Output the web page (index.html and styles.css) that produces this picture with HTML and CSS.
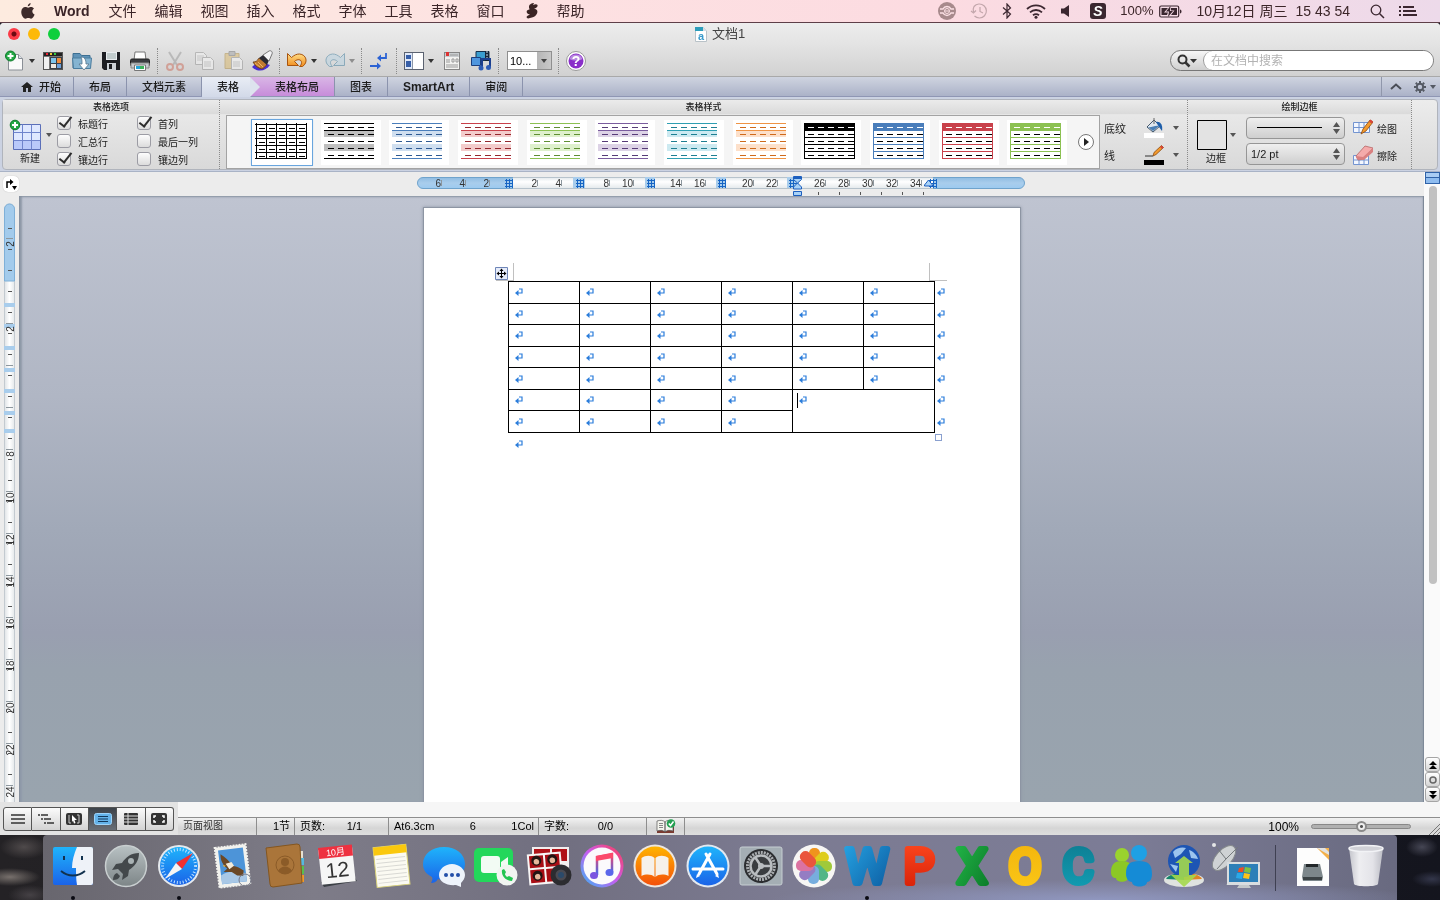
FILE: index.html
```html
<!DOCTYPE html>
<html lang="zh-CN">
  <head>
    <meta charset="UTF-8" />
    <meta name="viewport" content="width=device-width, initial-scale=1.0" />
    <title>文档1</title>
    <link rel="stylesheet" href="styles.css">
  </head>
  <body>
    <!-- Shared shapes -->
    <svg class="defs" aria-hidden="true">
      <defs>
        <linearGradient id="gBlue" x1="0" y1="0" x2="0" y2="1"><stop offset="0" stop-color="#1fb4fb"/><stop offset="1" stop-color="#1a63e8"/></linearGradient>
        <linearGradient id="gGrey" x1="0" y1="0" x2="0" y2="1"><stop offset="0" stop-color="#b9c2c4"/><stop offset="1" stop-color="#7d8587"/></linearGradient>
        <linearGradient id="gOrange" x1="0" y1="0" x2="0" y2="1"><stop offset="0" stop-color="#ffb400"/><stop offset="1" stop-color="#f4500a"/></linearGradient>
        <linearGradient id="gRing" x1="1" y1="0" x2="0" y2="1"><stop offset="0" stop-color="#ff3b4e"/><stop offset=".5" stop-color="#c95cf0"/><stop offset="1" stop-color="#2fbaf5"/></linearGradient>
        <linearGradient id="gNote" x1="0" y1="0" x2="0" y2="1"><stop offset="0" stop-color="#fc4468"/><stop offset="1" stop-color="#3a6bf0"/></linearGradient>
        <linearGradient id="gW" x1="0" y1="0" x2="1" y2="1"><stop offset="0" stop-color="#27a5e4"/><stop offset="1" stop-color="#0b5a9f"/></linearGradient>
        <linearGradient id="gP" x1="0" y1="0" x2="0" y2="1"><stop offset="0" stop-color="#ff4a20"/><stop offset="1" stop-color="#d41c04"/></linearGradient>
        <linearGradient id="gX" x1="0" y1="0" x2="1" y2="1"><stop offset="0" stop-color="#23b648"/><stop offset="1" stop-color="#0a7a28"/></linearGradient>
        <linearGradient id="gO" x1="0" y1="0" x2="0" y2="1"><stop offset="0" stop-color="#f3b40c"/><stop offset="1" stop-color="#fbc818"/></linearGradient>
        <linearGradient id="gC" x1="0" y1="0" x2="0" y2="1"><stop offset="0" stop-color="#0d7b90"/><stop offset="1" stop-color="#12a0b6"/></linearGradient>
        <linearGradient id="gGlass" x1="0" y1="0" x2="1" y2="0"><stop offset="0" stop-color="#c4c5cc"/><stop offset=".3" stop-color="#eeeef1"/><stop offset=".7" stop-color="#e3e3e8"/><stop offset="1" stop-color="#bcbdc5"/></linearGradient>
        <linearGradient id="gUndo" x1="0" y1="0" x2="0" y2="1"><stop offset="0" stop-color="#ffe08a"/><stop offset="1" stop-color="#f08a1c"/></linearGradient>
        <linearGradient id="gRule" x1="0" y1="0" x2="0" y2="1"><stop offset="0" stop-color="#dfe6ea"/><stop offset=".4" stop-color="#fff"/><stop offset="1" stop-color="#e2e7ea"/></linearGradient>
        <linearGradient id="gRuleBlue" x1="0" y1="0" x2="0" y2="1"><stop offset="0" stop-color="#8fbce2"/><stop offset=".5" stop-color="#a9cdec"/><stop offset="1" stop-color="#9ccaf0"/></linearGradient>
        <linearGradient id="gV" x1="0" y1="0" x2="1" y2="0"><stop offset="0" stop-color="#dfe3e6"/><stop offset=".5" stop-color="#fff"/><stop offset="1" stop-color="#e4e8ea"/></linearGradient>
      </defs>

      <symbol id="ret" viewBox="0 0 8 8"><path d="M4 1h3v4H2" fill="none" stroke="#2b7ddb" stroke-width="1.200"/><path d="M0 5 3.500 2v6z" fill="#2b7ddb"/></symbol>
      <symbol id="down" viewBox="0 0 6 4"><path d="M0 0h6L3 4z" fill="currentColor"/></symbol>

      <!-- table style previews -->
      <symbol id="th-grid" viewBox="0 0 60 45">
        <path class="th-line" d="M4 3v36M14 3v36M24 3v36M34 3v36M44 3v36M54 3v36M3 4h52M3 11h52M3 18h52M3 25h52M3 32h52M3 38h52"/>
        <path class="th-dash" d="M7 8h46M7 15h46M7 22h46M7 29h46M7 36h46"/>
      </symbol>
      <symbol id="th-band" viewBox="0 0 60 45">
        <path class="th-fill" d="M3 11h50v6H3zM3 24h50v7H3z"/>
        <path class="th-line" d="M3 3.500h50M3 10.500h50M3 38.500h50"/>
        <path class="th-dash" d="M7 7.500h46M7 14.500h46M7 21.500h46M7 28.500h46M7 35.500h46"/>
      </symbol>
      <symbol id="th-head" viewBox="0 0 60 45">
        <path class="th-solid" d="M3 3h51v8H3z"/>
        <path class="th-line" d="M3.500 3v36M53.500 3v36M3 10.500h51M3 17.500h51M3 24.500h51M3 31.500h51M3 38.500h51"/>
        <path class="th-dash" d="M7 14.500h46M7 21.500h46M7 28.500h46M7 35.500h46"/>
        <path class="th-dash th-white" d="M7 7.500h46"/>
      </symbol>
    </svg>

    <!-- Menu bar -->
    <header class="menubar">
      <nav class="menus">
        <a class="apple" href="#" aria-label="Apple"><svg width="14" height="16" viewBox="0 0 14 16"><path d="M9.600 0c.2 1.600-1.200 3.300-2.800 3.300C6.600 1.800 8 .2 9.600 0zM10 4c1.300 0 2.400.7 3 1.600-2.500 1.500-2 5 .6 5.900-.7 1.900-2 4.200-3.500 4.200-1.100 0-1.500-.7-2.800-.7s-1.800.7-2.800.7C2.300 15.700 0 11.800.3 8.500.5 5.700 2.300 4 4.200 4c1.200 0 2.100.7 3 .7S9 4 10 4z" fill="#3d2b2b"/></svg></a>
        <a class="app" href="#">Word</a>
        <a href="#">文件</a>
        <a href="#">编辑</a>
        <a href="#">视图</a>
        <a href="#">插入</a>
        <a href="#">格式</a>
        <a href="#">字体</a>
        <a href="#">工具</a>
        <a href="#">表格</a>
        <a href="#">窗口</a>
        <a class="script" href="#" aria-label="脚本"><svg width="12" height="16" viewBox="0 0 12 16"><path d="M3 4C3 1 6 0 8 0l-1 2c2-1 4-1 4.500 0S11 5 8 6c3 0 4 2 3 4.500S8 14 6 14.500 2 16 1 15s0-2 1-2.500l2-1C1 11 0 9 1 7.500L4 6C3 6 3 5 3 4z" fill="#3b2424"/></svg></a>
        <a href="#">帮助</a>
      </nav>
      <div class="extras">
        <svg width="18" height="18" viewBox="0 0 18 18"><circle cx="9" cy="9" r="9" fill="#a78a8c"/><path d="M2 7h3a4.500 4.500 0 0 1 8 0h3M2 11h3a4.500 4.500 0 0 0 8 0h3" fill="none" stroke="#fbe0e4" stroke-width="1.500"/><circle cx="9" cy="9" r="2.500" fill="none" stroke="#fbe0e4"/><path d="M7 9h4" stroke="#fbe0e4"/></svg>
        <svg width="18" height="16" viewBox="0 0 18 16"><path d="M4 3.500A7 7 0 1 1 4.500 13M1 8l2.500 2L6 7.500M3.500 9A7 7 0 0 1 4 3.500M10 4v4.500l3 1.500" fill="none" stroke="#c2a6ab" stroke-width="1.200"/></svg>
        <svg width="10" height="16" viewBox="0 0 10 16"><path d="M1 4.500 8.500 11 5 15V1l3.500 4L1 11.500" fill="none" stroke="#3b2730" stroke-width="1.200"/></svg>
        <svg width="20" height="15" viewBox="0 0 20 15"><path d="M1 5a13 13 0 0 1 18 0M4 8.300a9 9 0 0 1 12 0M7 11.300a5 5 0 0 1 6 0" fill="none" stroke="#3b2730" stroke-width="1.800"/><circle cx="10" cy="13.300" r="1.500" fill="#3b2730"/></svg>
        <svg width="10" height="14" viewBox="0 0 10 14"><path d="M1 4.500h3L9 1v12L4 9.500H1z" fill="#3b2730"/></svg>
        <svg class="sogou" width="16" height="16" viewBox="0 0 16 16"><rect width="16" height="16" rx="3" fill="#3b2730"/><text x="8" y="13" font-size="14" font-weight="bold" font-style="italic" text-anchor="middle" fill="#fff">S</text></svg>
        <span class="pct">100%</span>
        <svg width="23" height="13" viewBox="0 0 23 13"><rect x=".7" y="1" width="19" height="11" rx="1.500" fill="none" stroke="#3b2730" stroke-width="1.200"/><path d="M2.500 3H9L5 7.500h4L8 10H2.500zM12 3h6v7h-6l3.500-4.500H12zM11.500 1 7 6.500h3L9 12l5-6h-3z" fill="#3b2730"/><path d="M21 4.500c2 .5 2 3.500 0 4z" fill="#3b2730"/></svg>
        <span class="date">10月12日 周三</span>
        <span class="time">15 43 54</span>
        <svg width="15" height="15" viewBox="0 0 15 15"><circle cx="6" cy="6" r="4.800" fill="none" stroke="#3b2730" stroke-width="1.300"/><path d="m9.500 9.500 4.500 4.500" stroke="#3b2730" stroke-width="1.500"/></svg>
        <svg width="18" height="12" viewBox="0 0 18 12"><path d="M0 2h2M4 2h11M0 6h2M4 6h13M0 10h2M4 10h14" stroke="#3b2730" stroke-width="2"/></svg>
      </div>
    </header>

    <main class="window">
      <div class="titlebar">
        <div class="lights">
          <button class="light red" aria-label="关闭"></button>
          <button class="light yellow" aria-label="最小化"></button>
          <button class="light green" aria-label="缩放"></button>
        </div>
        <h1>
          <svg width="12" height="15" viewBox="0 0 12 15"><path d="M.5.500h8L11.500 4v10.500H.500z" fill="#fff" stroke="#b9c2c8"/><path d="M0 0h8v4H0z" fill="#2d9dbb"/><path d="M8 0v4h4z" fill="#d5dee4"/><text x="6" y="13" font-size="11" font-weight="bold" text-anchor="middle" fill="#3a9bcc">a</text></svg>
          文档1
        </h1>
      </div>

      <div class="toolbar">
        <button class="tool split" aria-label="新建">
          <svg width="22" height="22" viewBox="0 0 22 22"><path d="M4.500 4.500h10l4 4v11.500h-14z" fill="#fafafa" stroke="#8a8f96"/><path d="M14.500 4.500v4h4" fill="#dde2e8" stroke="#8a8f96"/><circle cx="6.500" cy="6" r="5" fill="#24a845" stroke="#0d7a2a"/><path d="M6.500 3v6M3.500 6h6" stroke="#fff" stroke-width="2"/></svg>
          <svg class="arr" width="6" height="4"><use href="#down"/></svg>
        </button>
        <button class="tool" aria-label="模板">
          <svg width="22" height="22" viewBox="0 0 22 22"><rect x="1.500" y="2.500" width="19" height="17" fill="#777" stroke="#555"/><path d="M2 3h18v3H2z" fill="#222"/><path d="M4 3h2v2H4z" fill="#e23"/><path d="M8 3h2v2H8z" fill="#ec3"/><path d="M12 3h2v2h-2z" fill="#3c4"/><path d="M2 7h5v12H2z" fill="#f1f1f1"/><path d="M8 7h12v12H8z" fill="#3a3f46"/><path d="M9 8h5v5H9z" fill="#7fc4ea"/><path d="M15 8h4v5h-4z" fill="#f08c3c"/><path d="M9 14h5v4H9z" fill="#f0e9e0"/><path d="M15 14h4v4h-4z" fill="#6fa2dc"/></svg>
        </button>
        <button class="tool" aria-label="打开">
          <svg width="22" height="22" viewBox="0 0 22 22"><path d="M2 3.500h7l1.500 2H19V18H2z" fill="#5f93b8" stroke="#3d6f92"/><path d="M1.500 8h19l-1 10.500H2.500z" fill="#86b4d1" stroke="#4b7c9e"/><path d="M10 7c4 0 5 3 5 7h3l-5 6-5-6h3c0-3 0-5-1-7z" fill="#fff" stroke="#55738a" stroke-width=".8"/></svg>
        </button>
        <button class="tool" aria-label="保存">
          <svg width="22" height="22" viewBox="0 0 22 22"><path d="M2 2h18v18H4l-2-2z" fill="#1c1d22"/><path d="M6 2h11v8H6z" fill="#e9ecef"/><path d="M7 4h9M7 6h9M7 8h9" stroke="#9aa"/><path d="M7 13h9v7H7z" fill="#cdd2d8"/><path d="M9 14h3v5H9z" fill="#1c1d22"/></svg>
        </button>
        <button class="tool" aria-label="打印">
          <svg width="22" height="22" viewBox="0 0 22 22"><path d="M6 2h10l1 8H5z" fill="#fff" stroke="#777"/><rect x="1.500" y="9" width="19" height="7" rx="1.500" fill="#3a3c40" stroke="#222"/><path d="M2 13h18v5H2z" fill="#c7cbcf" stroke="#888"/><path d="M5.500 15h11v5.500h-11z" fill="#fff" stroke="#777"/><path d="M7 16h4v3H7z" fill="#24a5d8"/><path d="M11 16h4v3h-4z" fill="#3bb35b"/></svg>
        </button>
        <span class="sep"></span>
        <button class="tool dim" aria-label="剪切">
          <svg width="22" height="22" viewBox="0 0 22 22"><path d="M5 2l8 13M17 2 9 15" stroke="#8f8f8f" stroke-width="2"/><circle cx="6" cy="17" r="3" fill="none" stroke="#c9604c" stroke-width="2"/><circle cx="16" cy="17" r="3" fill="none" stroke="#c9604c" stroke-width="2"/></svg>
        </button>
        <button class="tool dim" aria-label="复制">
          <svg width="22" height="22" viewBox="0 0 22 22"><path d="M2.500 2.500h8l3 3v9h-11z" fill="#f5f5f5" stroke="#888"/><path d="M4 6h7M4 8h7M4 10h7" stroke="#aaa"/><path d="M9.500 7.500h8l3 3v9h-11z" fill="#fafafa" stroke="#888"/><path d="M11 12h7M11 14h7M11 16h7" stroke="#aaa"/></svg>
        </button>
        <button class="tool dim" aria-label="粘贴">
          <svg width="22" height="22" viewBox="0 0 22 22"><path d="M3 3.500h14v15H3z" fill="#d9b35c" stroke="#a8822e"/><path d="M7 1.500h6v4H7z" fill="#999" stroke="#666"/><path d="M9.500 7.500h8l3 3v9h-11z" fill="#fafafa" stroke="#888"/><path d="M11 12h7M11 14h7M11 16h7" stroke="#aaa"/></svg>
        </button>
        <button class="tool" aria-label="格式刷">
          <svg width="22" height="22" viewBox="0 0 22 22"><path d="M1 17c3-3 6-5 9-5l9 3c-4 6-12 8-18 2z" fill="#4a2fd0"/><path d="M2 12c3 0 4-1 6-4l8 6c-1 2-3 4-5 5-4-1-7-3-9-7z" fill="#c07a30" stroke="#5b3411" stroke-width=".7"/><path d="M4 13l5 4M7 12l5 5" stroke="#f0b860"/><path d="m8 8 4-3 6 5-2 5z" fill="#2b2b33"/><path d="m12 5 6-4c2-1 4 1 3 3l-3 7z" fill="#f3f3f5" stroke="#777"/></svg>
        </button>
        <span class="sep"></span>
        <button class="tool split" aria-label="撤消">
          <svg width="22" height="22" viewBox="0 0 22 22"><path d="M1.500 3.500v12h11l-4-4c3-3 7-2 7 1 0 2-1 3-2 4h3c6-4 4-12-3-12.500-3 0-5 1-8 3.500z" fill="url(#gUndo)" stroke="#a8540f"/></svg>
          <svg class="arr" width="6" height="4"><use href="#down"/></svg>
        </button>
        <button class="tool split dim" aria-label="恢复">
          <svg width="22" height="22" viewBox="0 0 22 22"><path d="M20.500 3.500v12h-11l4-4c-3-3-7-2-7 1 0 2 1 3 2 4h-3c-6-4-4-12 3-12.500 3 0 5 1 8 3.500z" fill="#b5d3e4" stroke="#2f7396"/></svg>
          <svg class="arr" width="6" height="4"><use href="#down"/></svg>
        </button>
        <span class="sep"></span>
        <button class="tool" aria-label="显示编辑标记">
          <svg width="22" height="22" viewBox="0 0 22 22"><path d="M18 3v5h-6M2 16h7" fill="none" stroke="#2c63d4" stroke-width="1.800"/><path d="M9 8l4-3.500v7zM13 16l-4-3.500v7z" fill="#2c63d4"/></svg>
        </button>
        <span class="sep"></span>
        <button class="tool split" aria-label="侧栏">
          <svg width="22" height="22" viewBox="0 0 22 22"><rect x="1.500" y="2.500" width="19" height="17" fill="#fff" stroke="#5b6270"/><path d="M2 3h7v16H2z" fill="#dfe8f8"/><path d="M9.500 3v16" stroke="#8c97a8"/><path d="M3 5h5v4H3zM3 11h5v6H3z" fill="#365ea8"/></svg>
          <svg class="arr" width="6" height="4"><use href="#down"/></svg>
        </button>
        <button class="tool" aria-label="工具箱">
          <svg width="22" height="22" viewBox="0 0 22 22"><rect x="3.500" y="2.500" width="15" height="17" fill="#f2f2f0" stroke="#858585"/><path d="M4 3h14v4H4z" fill="#c9cdd0"/><path d="M5 2h3v4H5z" fill="#d33"/><path d="M9 5h8M5 10h4M5 12h4M11 9h2v3h-2zM15 9h2v3h-2zM5 15h12M5 17h12" stroke="#999" fill="none"/></svg>
        </button>
        <button class="tool" aria-label="媒体">
          <svg width="22" height="22" viewBox="0 0 22 22"><path d="M6 1.500h13v9H6z" fill="#3a9dd0" stroke="#16324f"/><path d="M15 1h4v10h-4z" fill="#16263a"/><path d="M16 2h2M16 5h2M16 8h2" stroke="#cde"/><path d="M1.500 7.500h9v8h-9z" fill="#4f96df" stroke="#1c3f7e"/><path d="M12 18V9h8v8" fill="none" stroke="#1c3f8e" stroke-width="2"/><circle cx="11" cy="18" r="2.500" fill="#2d5cb5"/><circle cx="18.500" cy="17.500" r="2.500" fill="#2d5cb5"/></svg>
        </button>
        <span class="sep"></span>
        <span class="zoom-pick">
          <select aria-label="显示比例"><option>10...</option></select>
          <svg width="6" height="4"><use href="#down"/></svg>
        </span>
        <span class="sep"></span>
        <button class="tool" aria-label="帮助">
          <svg width="22" height="22" viewBox="0 0 22 22"><circle cx="11" cy="11" r="9.500" fill="#fff" stroke="#999"/><circle cx="11" cy="11" r="7.500" fill="#8a2fc9"/><path d="M4.500 9a7 7 0 0 1 13 0c-4 2-9 2-13 0z" fill="#b98ae0"/><text x="11" y="16" font-size="14" font-weight="bold" text-anchor="middle" fill="#fff">?</text></svg>
        </button>

        <div class="search">
          <button aria-label="搜索选项">
            <svg width="20" height="14" viewBox="0 0 20 14"><circle cx="5.500" cy="5.500" r="4" fill="none" stroke="#333" stroke-width="2"/><path d="m8.500 8.500 4 4" stroke="#333" stroke-width="2.500"/><path d="M13 5h7l-3.500 4z" fill="#333"/></svg>
          </button>
          <input type="text" aria-label="搜索" placeholder="在文档中搜索" />
        </div>
      </div>

      <nav class="tabs">
        <a href="#"><svg width="12" height="10" viewBox="0 0 12 10"><path d="M6 0 0 5h2v5h3V6h2v4h3V5h2z" fill="#222"/></svg>开始</a>
        <a href="#">布局</a>
        <a href="#">文档元素</a>
        <a class="active" href="#">表格</a>
        <a class="context" href="#">表格布局</a>
        <a href="#">图表</a>
        <a class="latin" href="#">SmartArt</a>
        <a href="#">审阅</a>
        <div class="tab-tools">
          <button aria-label="折叠"><svg width="12" height="7" viewBox="0 0 12 7"><path d="m1 6 5-4.500L11 6" fill="none" stroke="#4a4e57" stroke-width="2"/></svg></button>
          <button aria-label="设置"><svg width="22" height="12" viewBox="0 0 22 12"><circle cx="6" cy="6" r="3.200" fill="none" stroke="#555a64" stroke-width="2"/><path d="M6 0v2M6 10v2M0 6h2M10 6h2M1.800 1.800l1.400 1.400M8.800 8.800l1.400 1.400M10.200 1.800 8.800 3.200M3.200 8.800l-1.400 1.400" stroke="#555a64" stroke-width="2"/><path d="M16 4h6l-3 4z" fill="#555a64"/></svg></button>
        </div>
      </nav>

      <div class="ribbon">
        <div class="panel">
          <section class="group options">
            <h2>表格选项</h2>
            <div class="group-body">
              <button class="big">
                <span class="big-icon">
                  <svg width="34" height="32" viewBox="0 0 34 32"><path d="M4.500 5.500h27v25h-27z" fill="#dfe8ff" stroke="#5b6fb8"/><path d="M5 22h26v8H5z" fill="#b9c9fa"/><path d="M4.500 13.500h27M4.500 21.500h27M13.500 5.500v25M22.500 5.500v25" stroke="#6f84cc"/><circle cx="6" cy="6" r="4.800" fill="#24a845" stroke="#0d7a2a"/><path d="M6 3v6M3 6h6" stroke="#fff" stroke-width="2"/></svg>
                  <svg class="arr" width="6" height="4"><use href="#down"/></svg>
                </span>
                新建
              </button>
              <div class="checks">
                <label><input type="checkbox" checked />标题行</label>
                <label><input type="checkbox" checked />首列</label>
                <label><input type="checkbox" />汇总行</label>
                <label><input type="checkbox" />最后一列</label>
                <label><input type="checkbox" checked />镶边行</label>
                <label><input type="checkbox" />镶边列</label>
              </div>
            </div>
          </section>

          <section class="group styles">
            <h2>表格样式</h2>
            <div class="group-body">
              <div class="gallery">
                <button class="thumb selected" aria-label="网格型"><svg width="60" height="45"><use href="#th-grid"/></svg></button>
                <button class="thumb" aria-label="浅色底纹"><svg width="60" height="45"><use href="#th-band"/></svg></button>
                <button class="thumb blue" aria-label="浅色底纹 蓝"><svg width="60" height="45"><use href="#th-band"/></svg></button>
                <button class="thumb red" aria-label="浅色底纹 红"><svg width="60" height="45"><use href="#th-band"/></svg></button>
                <button class="thumb green" aria-label="浅色底纹 绿"><svg width="60" height="45"><use href="#th-band"/></svg></button>
                <button class="thumb purple" aria-label="浅色底纹 紫"><svg width="60" height="45"><use href="#th-band"/></svg></button>
                <button class="thumb teal" aria-label="浅色底纹 青"><svg width="60" height="45"><use href="#th-band"/></svg></button>
                <button class="thumb orange" aria-label="浅色底纹 橙"><svg width="60" height="45"><use href="#th-band"/></svg></button>
                <button class="thumb head" aria-label="浅色列表"><svg width="60" height="45"><use href="#th-head"/></svg></button>
                <button class="thumb blue head" aria-label="浅色列表 蓝"><svg width="60" height="45"><use href="#th-head"/></svg></button>
                <button class="thumb red head" aria-label="浅色列表 红"><svg width="60" height="45"><use href="#th-head"/></svg></button>
                <button class="thumb green head" aria-label="浅色列表 绿"><svg width="60" height="45"><use href="#th-head"/></svg></button>
                <button class="more" aria-label="更多样式"><svg width="16" height="16" viewBox="0 0 16 16"><circle cx="8" cy="8" r="7.500" fill="#fff" stroke="#777"/><path d="M6 4v8l5-4z" fill="#222"/></svg></button>
              </div>
              <div class="shade">
                <button>底纹
                  <svg width="20" height="20" viewBox="0 0 20 20"><path d="M0 15h20v5H0z" fill="#fff"/><path d="m3 9 7-7 6 6-7 6z" fill="#dfe7ef" stroke="#44586c"/><path d="M4 9c3 1 7-2 11-1l-6 5z" fill="#4a7fb5"/><path d="M12 4c5-1 7 4 6 9l-3-4z" fill="#1f5faa"/><path d="M10 0v6" stroke="#666"/></svg>
                  <svg class="arr" width="6" height="4"><use href="#down"/></svg>
                </button>
                <button>线
                  <svg width="20" height="20" viewBox="0 0 20 20"><path d="M0 15h20v5H0z"/><path d="M1 11h8" stroke="#333"/><path d="m9 11 1-3.500L17.500.500l2 2-7.500 7z" fill="#f39a2c" stroke="#8b4a10" stroke-width=".8"/><path d="m16 2 1.500-1.500 2 2L18 4z" fill="#d9443a"/></svg>
                  <svg class="arr" width="6" height="4"><use href="#down"/></svg>
                </button>
              </div>
            </div>
          </section>

          <section class="group borders">
            <h2>绘制边框</h2>
            <div class="group-body">
              <button class="big">
                <span class="big-icon">
                  <svg width="30" height="30" viewBox="0 0 30 30"><path d="M.5.500h29v29H.500z" fill="#e3e3e3" stroke="#000"/></svg>
                  <svg class="arr" width="6" height="4"><use href="#down"/></svg>
                </span>
                边框
              </button>
              <div class="picks">
                <span class="pick line"><select aria-label="线型"><option aria-label="实线"></option></select><svg width="7" height="12" viewBox="0 0 7 12"><path d="M0 5h7L3.500 0zM0 7h7l-3.500 5z" fill="#555"/></svg></span>
                <span class="pick"><select aria-label="粗细"><option>1/2 pt</option></select><svg width="7" height="12" viewBox="0 0 7 12"><path d="M0 5h7L3.500 0zM0 7h7l-3.500 5z" fill="#555"/></svg></span>
              </div>
              <div class="draws">
                <button><svg width="20" height="20" viewBox="0 0 20 20"><path d="M.5 4.500h16v10H.500zM.5 9.500h16M6 4.500v10M11 4.500v10" fill="#f3f7ff" stroke="#7394d0"/><path d="m8 16 2-5 7-9 3 2-7 9z" fill="#f39a2c" stroke="#8b4a10" stroke-width=".8"/><path d="m16 4 1.500-2.500L20 3.500l-1 2z" fill="#d9443a"/></svg>绘图</button>
                <button><svg width="20" height="20" viewBox="0 0 20 20"><path d="M.5 10.500h15v9H.500zM.5 15h15M6 10.500v9M11 10.500v9" fill="#f3f7ff" stroke="#7394d0"/><path d="m3 11 9-10 8 2-9 11-6 1z" fill="#f4abab" stroke="#b56464" stroke-width=".8"/><path d="m3 11 7 1 10-9v4l-9 8-7-1z" fill="#d98080"/></svg>擦除</button>
              </div>
            </div>
          </section>
        </div>
      </div>

      <div class="main">
        <div class="doc">
          <div class="ruler-row">
            <button class="tabstop" aria-label="制表符"><svg width="12" height="12" viewBox="0 0 12 12"><path d="M2 10V4h5" fill="none" stroke="#000" stroke-width="1.500"/><path d="M5 1v6l3.500-3zM7 8h5l-2.500 4z"/></svg></button>
            <svg class="hruler" width="608" height="24" viewBox="0 0 608 24">
              <rect x=".5" y="5.500" width="607" height="11" rx="5.500" fill="url(#gRuleBlue)" stroke="#6fa3cc"/>
              <path d="M96 5h420v12H96z" fill="url(#gRule)"/><path d="M96 5.500h420M96 16.500h420" stroke="#b7c3cc"/>
              <path d="M156 5h12v11h-12zM228 5h10v11h-10zM299 5h10v11h-10zM370 5h12v11h-12z" fill="#a9cdec"/>
              <path class="ticks" d="M24.500 8v6M48.500 8v6M72.500 8v6M120.500 8v6M144.500 8v6M192.500 8v6M216.500 8v6M264.500 8v6M288.500 8v6M336.500 8v6M360.500 8v6M408.500 8v6M432.500 8v6M456.500 8v6M480.500 8v6M504.500 8v6"/>
              <path class="ticks dark" d="M401.500 20v3M422.500 20v3M443.500 20v3M464.500 20v3M485.500 20v3M506.500 20v3"/>
              <g class="nums">
                <text x="24" y="15">6</text><text x="48" y="15">4</text><text x="72" y="15">2</text>
                <text x="120" y="15">2</text><text x="144" y="15">4</text><text x="192" y="15">8</text><text x="216" y="15">10</text>
                <text x="264" y="15">14</text><text x="288" y="15">16</text><text x="336" y="15">20</text><text x="360" y="15">22</text>
                <text x="408" y="15">26</text><text x="432" y="15">28</text><text x="456" y="15">30</text><text x="480" y="15">32</text><text x="504" y="15">34</text>
              </g>
              <g class="cols">
                <path d="M88 8h8M88 11h8M88 14h8M89 7v9M92 7v9M95 7v9"/>
                <path d="M159 8h8M159 11h8M159 14h8M160 7v9M163 7v9M166 7v9"/>
                <path d="M230 8h8M230 11h8M230 14h8M231 7v9M234 7v9M237 7v9"/>
                <path d="M301 8h8M301 11h8M301 14h8M302 7v9M305 7v9M308 7v9"/>
                <path d="M372 8h8M372 11h8M372 14h8M373 7v9M376 7v9"/>
                <path d="M512 8h8M512 11h8M512 14h8M513 7v9M516 7v9M519 7v9"/>
              </g>
              <path d="M376.500 4.500h8v3l-4 3.500-4-3.500zM380.500 11l4 4v2h-8v-2zM376.500 19.500h8v4h-8zM507.500 13l4-5 4 5v1h-8z" fill="#a8d2f8" stroke="#1d5fbe"/>
              <path d="M377 5h7v2h-7z" fill="#1d5fbe"/>
            </svg>
          </div>
          <div class="work">
            <svg class="vruler" width="19" height="606" viewBox="0 0 19 606">
              <path d="M4.500 606V13a5 5 0 0 1 10 0v593" fill="url(#gV)" stroke="#c3cad0"/>
              <path d="M4.500 85V13a5 5 0 0 1 10 0v72z" fill="#a3cbec" stroke="#7fb0d8"/>
              <path d="M4 107h11v4H4zM4 128h11v4H4zM4 150h11v4H4zM4 172h11v4H4zM4 193h11v4H4zM4 215h11v4H4zM4 233h11v4H4z" fill="#a9cdec"/>
              <path class="ticks" d="M6 42.500h7M6 127.500h7M6 169.500h7M6 211.500h7M6 253.500h7M6 295.500h7M6 337.500h7M6 379.500h7M6 421.500h7M6 463.500h7M6 505.500h7M6 547.500h7M6 589.500h7"/>
              <path class="ticks dark" d="M8 32.500h4M8 53.500h4M8 74.500h4M8 95.500h4M8 116.500h4M8 137.500h4M8 158.500h4M8 179.500h4M8 200.500h4M8 221.500h4M8 242.500h4M8 263.500h4M8 284.500h4M8 305.500h4M8 326.500h4M8 347.500h4M8 368.500h4M8 389.500h4M8 410.500h4M8 431.500h4M8 452.500h4M8 473.500h4M8 494.500h4M8 515.500h4M8 536.500h4M8 557.500h4M8 578.500h4"/>
              <g class="vnums">
                <text transform="translate(14 48) rotate(-90)">2</text><text transform="translate(14 133) rotate(-90)">2</text>
                <text transform="translate(14 258) rotate(-90)">8</text><text transform="translate(14 302) rotate(-90)">10</text>
                <text transform="translate(14 344) rotate(-90)">12</text><text transform="translate(14 386) rotate(-90)">14</text>
                <text transform="translate(14 428) rotate(-90)">16</text><text transform="translate(14 470) rotate(-90)">18</text>
                <text transform="translate(14 512) rotate(-90)">20</text><text transform="translate(14 554) rotate(-90)">22</text>
                <text transform="translate(14 596) rotate(-90)">24</text>
              </g>
            </svg>
            <div class="canvas">
              <article class="page">
                <span class="corner left"></span>
                <span class="corner right"></span>
                <div class="sheet">
                  <button class="move" aria-label="移动表格"><svg width="13" height="13" viewBox="0 0 13 13"><path d="M.5.500h12v12H.500z" fill="#e6ecfa" stroke="#6f86b8"/><path d="M6.500 3v7M3 6.500h7" stroke="#000"/><path d="M6.500 1.500 8.500 4h-4zM6.500 11.500 8.500 9h-4zM1.500 6.500 4 4.500v4zM11.500 6.500 9 4.500v4z"/></svg></button>
                  <table>
                    <tr><td><svg><use href="#ret"/></svg></td><td><svg><use href="#ret"/></svg></td><td><svg><use href="#ret"/></svg></td><td><svg><use href="#ret"/></svg></td><td><svg><use href="#ret"/></svg></td><td><svg><use href="#ret"/></svg></td><td class="end"><svg><use href="#ret"/></svg></td></tr>
                    <tr><td><svg><use href="#ret"/></svg></td><td><svg><use href="#ret"/></svg></td><td><svg><use href="#ret"/></svg></td><td><svg><use href="#ret"/></svg></td><td><svg><use href="#ret"/></svg></td><td><svg><use href="#ret"/></svg></td><td class="end"><svg><use href="#ret"/></svg></td></tr>
                    <tr><td><svg><use href="#ret"/></svg></td><td><svg><use href="#ret"/></svg></td><td><svg><use href="#ret"/></svg></td><td><svg><use href="#ret"/></svg></td><td><svg><use href="#ret"/></svg></td><td><svg><use href="#ret"/></svg></td><td class="end"><svg><use href="#ret"/></svg></td></tr>
                    <tr><td><svg><use href="#ret"/></svg></td><td><svg><use href="#ret"/></svg></td><td><svg><use href="#ret"/></svg></td><td><svg><use href="#ret"/></svg></td><td><svg><use href="#ret"/></svg></td><td><svg><use href="#ret"/></svg></td><td class="end"><svg><use href="#ret"/></svg></td></tr>
                    <tr><td><svg><use href="#ret"/></svg></td><td><svg><use href="#ret"/></svg></td><td><svg><use href="#ret"/></svg></td><td><svg><use href="#ret"/></svg></td><td><svg><use href="#ret"/></svg></td><td><svg><use href="#ret"/></svg></td><td class="end"><svg><use href="#ret"/></svg></td></tr>
                    <tr><td><svg><use href="#ret"/></svg></td><td><svg><use href="#ret"/></svg></td><td><svg><use href="#ret"/></svg></td><td><svg><use href="#ret"/></svg></td><td class="merged" colspan="2" rowspan="2"><svg><use href="#ret"/></svg></td><td class="end"><svg><use href="#ret"/></svg></td></tr>
                    <tr><td><svg><use href="#ret"/></svg></td><td><svg><use href="#ret"/></svg></td><td><svg><use href="#ret"/></svg></td><td><svg><use href="#ret"/></svg></td><td class="end"><svg><use href="#ret"/></svg></td></tr>
                  </table>
                  <span class="resize"></span>
                  <p><svg><use href="#ret"/></svg></p>
                </div>
              </article>
            </div>
          </div>
        </div>
        <div class="vscroll">
          <button class="splitter" aria-label="拆分"></button>
          <div class="track"><div class="thumb-bar"></div></div>
          <button class="nav" aria-label="上一页"><svg width="8" height="8" viewBox="0 0 8 8"><path d="M4 0 8 4H0zM4 4l4 4H0z"/></svg></button>
          <button class="nav" aria-label="浏览对象"><svg width="8" height="8" viewBox="0 0 8 8"><circle cx="4" cy="4" r="3" fill="#ddd" stroke="#666" stroke-width="1.500"/></svg></button>
          <button class="nav" aria-label="下一页"><svg width="8" height="8" viewBox="0 0 8 8"><path d="M4 4 0 0h8zM4 8 0 4h8z"/></svg></button>
        </div>
      </div>

      <footer class="footer">
        <div class="views">
          <button aria-label="草稿视图"><svg width="16" height="12" viewBox="0 0 16 12"><path d="M1 2h14M1 6h14M1 10h14" stroke="#333" stroke-width="1.500"/></svg></button>
          <button aria-label="大纲视图"><svg width="16" height="12" viewBox="0 0 16 12"><path d="M0 2h2M3 2h7M3 6h2M6 6h7M6 10h2M9 10h7" stroke="#333" stroke-width="1.500"/></svg></button>
          <button aria-label="发布版式视图"><svg width="16" height="12" viewBox="0 0 16 12"><rect width="16" height="12" rx="2" fill="#333"/><path d="M3 2v8h2M11 2h2v8h-2" fill="none" stroke="#ccc"/><path d="m6 2 5 5H8.500l1 3-1.500.500-1-3L6 9z" fill="#fff"/></svg></button>
          <button class="on" aria-label="页面视图"><svg width="18" height="12" viewBox="0 0 18 12"><rect x=".5" y=".5" width="17" height="11" rx="2" fill="#63b3ea" stroke="#9cd4fb"/><path d="M4 3.500h10M4 6h10M4 8.500h10" stroke="#12395c"/></svg></button>
          <button aria-label="笔记本版式视图"><svg width="16" height="12" viewBox="0 0 16 12"><rect x="1" width="14" height="12" rx="1" fill="#333"/><path d="M0 3h15M0 6h15M0 9h15M5 0v12" stroke="#ddd"/></svg></button>
          <button aria-label="全屏视图"><svg width="16" height="12" viewBox="0 0 16 12"><rect width="16" height="12" rx="2" fill="#333"/><path d="M3 5V3h2M11 3h2v2M13 7v2h-2M5 9H3V7" fill="none" stroke="#fff" stroke-width="1.500"/></svg></button>
        </div>
        <div class="info">
          <div class="hscroll"></div>
          <div class="status">
            <span class="cell view-name">页面视图</span>
            <span class="cell section">1节</span>
            <span class="cell pages"><span>页数:</span><span>1/1</span></span>
            <span class="cell place"><span>At6.3cm</span><span>6</span><span>1Col</span></span>
            <span class="cell words"><span>字数:</span><span>0/0</span></span>
            <span class="cell spell"><svg width="20" height="15" viewBox="0 0 20 15"><path d="M1 3h17v11H1z" fill="#7b3a30"/><path d="M1 2c3-1 6-1 8 1v10c-2-2-5-2-8-1zM17 2c-3-1-6-1-8 1v10c2-2 5-2 8-1z" fill="#f4f4ee" stroke="#555" stroke-width=".7"/><path d="M3 4.500h4M3 6.500h4M3 8.500h4" stroke="#888"/><circle cx="15" cy="4.500" r="4.300" fill="#24a052"/><path d="m12.800 4.500 1.700 2 3-4" fill="none" stroke="#fff" stroke-width="1.500"/></svg></span>
            <label class="zoom" for="zoom">100%</label>
            <input id="zoom" type="range" min="0" max="100" value="51" />
            <svg class="grip" width="12" height="12" viewBox="0 0 12 12"><path d="M1 12 12 1M5 12l7-7M9 12l3-3" stroke="#777"/></svg>
          </div>
        </div>
      </footer>
    </main>

    <!-- Dock -->
    <div class="desktop">
      <nav class="dock">
        <a class="running" href="#" aria-label="Finder"><svg viewBox="0 0 44 44"><rect x="2" y="3" width="40" height="38" rx="2" fill="url(#gBlue)"/><path d="M26 3c-3 7-5 14-5 21h4c0 6 0 11 1 17h14a2 2 0 0 0 2-2V5a2 2 0 0 0-2-2z" fill="#eef2f8"/><path d="M13 12v4M31 12v4" stroke="#12324f" stroke-width="2"/><path d="M10 27c7 6 17 6 24 0" fill="none" stroke="#12324f" stroke-width="1.800"/></svg></a>
        <a href="#" aria-label="Launchpad"><svg viewBox="0 0 44 44"><circle cx="22" cy="22" r="20.500" fill="url(#gGrey)" stroke="#c9cfd0" stroke-width="1.500"/><path d="M35 9c-8 0-13 4-17 10l-6 1-4 6 6-1 5 5-1 6 6-4 1-6c6-4 10-9 10-17zM13 29c-3 1-4 4-4 7 3 0 6-1 7-4z" fill="#43484b"/><circle cx="27" cy="17" r="3" fill="#a9b2b4"/></svg></a>
        <a class="running" href="#" aria-label="Safari"><svg viewBox="0 0 44 44"><circle cx="22" cy="22" r="21" fill="#e6eaee"/><circle cx="22" cy="22" r="19" fill="url(#gBlue)"/><circle cx="22" cy="22" r="16.500" fill="none" stroke="#bfe3ff" stroke-width="3" stroke-dasharray="1 2"/><path d="m36 9-17 10 6 6z" fill="#f03030"/><path d="m8 35 11-16 6 6z" fill="#f4f4f4"/></svg></a>
        <a href="#" aria-label="Mail"><svg viewBox="0 0 44 44"><g transform="rotate(-7 22 22)"><rect x="7" y="2" width="31" height="40" fill="#f2f2ee" stroke="#f2f2ee" stroke-width="2" stroke-dasharray="2 1"/><rect x="10" y="5" width="25" height="34" fill="#4d94d8"/><path d="M10 30c7-4 15-3 25 1v8H10z" fill="#a9c8e6"/><path d="M12 9c4 3 8 8 11 13 4 1 7 3 10 6l-1 5-6-1-5-4-8-1 4-3c-4-4-6-9-5-15z" fill="#6b4826"/><path d="m16 19 6-1 2 4-5 3z" fill="#f3ead8"/><path d="m13 20 3 1-2 1z" fill="#f0b42c"/></g><circle cx="35" cy="36" r="6" fill="none" stroke="#777a88"/></svg></a>
        <a href="#" aria-label="通讯录"><svg viewBox="0 0 44 44"><path d="M35 7h5v7h-5z" fill="#e8e2d4"/><path d="M35 14h6v7h-6z" fill="#55b9e0"/><path d="M35 22h6v8h-6z" fill="#58bf4c"/><path d="M35 31h6v7h-6z" fill="#f09a2a"/><path d="m3 4 31-4q3 0 3 3l2 36-29 4q-3 0-3-3z" fill="#aa753a" stroke="#845620"/><circle cx="22" cy="21" r="9" fill="none" stroke="#8b5b28"/><circle cx="22" cy="18" r="4" fill="#8b5b28"/><path d="M15 27c3-6 11-6 14 0-4 4-10 4-14 0z" fill="#8b5b28"/></svg></a>
        <a href="#" aria-label="日历"><svg viewBox="0 0 44 44"><path d="m5 38 34-4 2 3-33 6z" fill="#3c4046"/><g transform="rotate(-6 22 22)"><path d="M4 4h34v35H4z" fill="#f6f6f6"/><path d="M4 2h34v11H4z" fill="#ee3140"/><text x="21" y="11" font-size="9" text-anchor="middle" fill="#fff">10月</text><text x="21" y="33" font-size="21" text-anchor="middle" fill="#333">12</text></g></svg></a>
        <a href="#" aria-label="备忘录"><svg viewBox="0 0 44 44"><g transform="rotate(-6 22 22)"><path d="M6 2h33v40H6z" fill="#fbfaf2" stroke="#d9d27a"/><path d="M6 2h33v8H6z" fill="#fac80e"/><path d="M8 14h29M8 18h29M8 22h29M8 26h29M8 30h29M8 34h29M8 38h29" stroke="#d9d9d4"/></g></svg></a>
        <a href="#" aria-label="信息"><svg viewBox="0 0 44 44"><path d="M22 3c12 0 21 7 21 17s-9 16-21 16c-2 0-4 0-6-1-2 3-4 4-7 4 1-2 2-4 1-6C4 30 1 26 1 20 1 10 10 3 22 3z" fill="url(#gBlue)"/><path d="M30 20c7 0 13 5 13 11 0 3-2 6-4 8v4l-5-2c-9 1-17-3-17-10 0-6 6-11 13-11z" fill="#eef3fb"/><circle cx="24" cy="31" r="2" fill="#234ea8"/><circle cx="30" cy="31" r="2" fill="#234ea8"/><circle cx="36" cy="31" r="2" fill="#234ea8"/></svg></a>
        <a href="#" aria-label="FaceTime"><svg viewBox="0 0 44 44"><rect y="4" width="39" height="34" rx="5" fill="#23d75b"/><rect x="7" y="12" width="19" height="17" rx="3" fill="#f2fbf4"/><path d="m27 18 7-5v15l-7-5z" fill="#f2fbf4"/><circle cx="33" cy="31" r="10.500" fill="#f1f5f1"/><path d="M28 26c-1 6 4 11 10 11l1-3-4-2-2 1c-1-1-2-2-2-3l1-2-2-3z" fill="#23c552"/></svg></a>
        <a href="#" aria-label="Photo Booth"><svg viewBox="0 0 44 44"><path d="M5 3h37v26H5z" fill="#f1eeee"/><path d="M7 5h16v10H7zM25 5h15v12H25z" fill="#b01218"/><g transform="rotate(-5 18 24)"><path d="M1 9h34v31H1z" fill="#f7f5f5"/><path d="M3 11h14v12H3zM19 11h14v12H19zM3 25h14v13H3zM19 25h14v13H19z" fill="#a80e15"/><g fill="#231413"><circle cx="10" cy="16" r="5"/><circle cx="26" cy="16" r="5"/><circle cx="10" cy="31" r="5"/></g><g fill="#e6b79c"><circle cx="10" cy="17" r="2.800"/><circle cx="26" cy="17" r="2.800"/><circle cx="10" cy="32" r="2.800"/></g></g><circle cx="34" cy="31" r="10.500" fill="#2c2c30"/><circle cx="34" cy="31" r="5.500" fill="#4a4a52"/><circle cx="34" cy="31" r="3" fill="#2b4a6a"/></svg></a>
        <a href="#" aria-label="iTunes"><svg viewBox="0 0 44 44"><circle cx="22" cy="22" r="21.500" fill="url(#gRing)"/><circle cx="22" cy="22" r="18.500" fill="#fbfafc"/><path d="M17 31V13l15-3v18" fill="none" stroke="url(#gNote)" stroke-width="2.500"/><path d="M16 12l17-3v5l-17 3z" fill="#fb4a6c"/><ellipse cx="14" cy="31.500" rx="4" ry="3.500" fill="#7b54e0"/><ellipse cx="29.500" cy="28.500" rx="4" ry="3.500" fill="#5a66ea"/></svg></a>
        <a href="#" aria-label="iBooks"><svg viewBox="0 0 44 44"><circle cx="22" cy="22" r="21.500" fill="#ece6e0"/><circle cx="22" cy="22" r="19.500" fill="url(#gOrange)"/><path d="M21.500 14c-3-3-9-3-13 0v18c4-2 10-2 13 1zM22.500 14c3-3 9-3 13 0v18c-4-2-10-2-13 1z" fill="#f6f1ea"/></svg></a>
        <a href="#" aria-label="App Store"><svg viewBox="0 0 44 44"><circle cx="22" cy="22" r="21.500" fill="#e3e9f0"/><circle cx="22" cy="22" r="19.500" fill="url(#gBlue)"/><g stroke="#fff" stroke-width="3" stroke-linecap="round"><path d="M24 10 13 30M20 10l11 20M7 25h30"/></g><path d="m10 34 1-4 3 2zM33 34l-1-4-3 2z" fill="#fff"/></svg></a>
        <a href="#" aria-label="系统偏好设置"><svg viewBox="0 0 44 44"><rect x="1" y="3" width="42" height="38" rx="2" fill="#a4aeb4" stroke="#c6ced2"/><circle cx="22" cy="22" r="17" fill="#2b2d30"/><circle cx="22" cy="22" r="13.500" fill="none" stroke="#a9adb0" stroke-width="3" stroke-dasharray="2 1"/><circle cx="22" cy="22" r="10.500" fill="#3a3d40" stroke="#b9bdc0" stroke-width="2.500"/><path d="M22 22h11M22 22l-6-9M22 22l-6 9" stroke="#b9bdc0" stroke-width="2.500"/><circle cx="22" cy="22" r="3" fill="#b9bdc0"/></svg></a>
        <a href="#" aria-label="照片"><svg viewBox="0 0 44 44"><circle cx="22" cy="22" r="21.500" fill="#f7f6f4"/><g class="petals"><rect x="17" y="4" width="11" height="18" rx="5" fill="#f79a1e"/><rect x="17" y="4" width="11" height="18" rx="5" fill="#e6d51e" transform="rotate(45 22 22)"/><rect x="17" y="4" width="11" height="18" rx="5" fill="#a5d13c" transform="rotate(90 22 22)"/><rect x="17" y="4" width="11" height="18" rx="5" fill="#55bd8c" transform="rotate(135 22 22)"/><rect x="17" y="4" width="11" height="18" rx="5" fill="#7bb4e8" transform="rotate(180 22 22)"/><rect x="17" y="4" width="11" height="18" rx="5" fill="#9a82cc" transform="rotate(225 22 22)"/><rect x="17" y="4" width="11" height="18" rx="5" fill="#e276a8" transform="rotate(270 22 22)"/><rect x="17" y="4" width="11" height="18" rx="5" fill="#f2583e" transform="rotate(315 22 22)"/></g></svg></a>
        <a class="running" href="#" aria-label="Word"><svg class="logo" viewBox="0 0 44 44"><text x="22" y="39" fill="url(#gW)" stroke="url(#gW)">W</text></svg></a>
        <a href="#" aria-label="PowerPoint"><svg class="logo" viewBox="0 0 44 44"><text x="22" y="39" fill="url(#gP)" stroke="url(#gP)">P</text></svg></a>
        <a href="#" aria-label="Excel"><svg class="logo" viewBox="0 0 44 44"><text x="22" y="39" fill="url(#gX)" stroke="url(#gX)">X</text></svg></a>
        <a href="#" aria-label="Outlook"><svg class="logo" viewBox="0 0 44 44"><text x="22" y="39" fill="url(#gO)" stroke="url(#gO)">O</text></svg></a>
        <a href="#" aria-label="Communicator"><svg class="logo" viewBox="0 0 44 44"><text x="22" y="39" fill="url(#gC)" stroke="url(#gC)">C</text></svg></a>
        <a href="#" aria-label="Messenger"><svg viewBox="0 0 44 44"><circle cx="13" cy="11" r="7" fill="#9ad32e"/><path d="M2 28c0-8 4-11 11-11s10 3 10 11c0 4-2 6-4 6 0 5-12 5-12 0-3 0-5-2-5-6z" fill="#8cc825"/><circle cx="30" cy="9" r="8" fill="#1fa0e4"/><path d="M17 30c0-10 4-13 13-13s13 3 13 13c0 5-2 8-5 8 0 6-15 6-15 0-3 0-6-3-6-8z" fill="#158bd6"/></svg></a>
        <a href="#" aria-label="下载"><svg viewBox="0 0 44 44"><ellipse cx="22" cy="36" rx="20" ry="7" fill="#dfe3e0"/><path d="M4 35c3-5 10-6 18-6v7z" fill="#16856b"/><path d="M40 35c-3-5-10-6-18-6v7z" fill="#e08424"/><circle cx="22" cy="17" r="16" fill="#1d55b4"/><path d="M11 8c4-5 10-5 13-4l-5 6-6 4zM27 6c4 1 8 5 9 9l-7-1zM8 20l8 2-2 6z" fill="#9cc4ee"/><path d="M22 12l9 7h-4v12h8l-13 12L9 31h8V19h-4z" fill="#a4d84c" opacity=".9"/></svg></a>
        <a href="#" aria-label="远程桌面"><svg viewBox="0 0 44 44"><path d="M12 20l5 12-6 9h12l-2-18z" fill="#9da1a4"/><path d="M0 1C-4 12-3 22 1 26 10 24 20 16 23 1z" fill="#c3c6c9" opacity="0"/><ellipse cx="9" cy="14" rx="15" ry="8" transform="rotate(-48 9 14)" fill="#cfd2d4" stroke="#85898c"/><path d="M-1 0 11 15M23 3 11 15M2 25l9-10" stroke="#75797c"/><circle cx="-1" cy="1" r="2" fill="#e4e6e7"/><path d="M12 18h33v23H12z" fill="#d9dde0"/><path d="M14 20h29v18H14z" fill="#2d7fb8"/><path d="M24 24l5-1-1 5h-5z" fill="#ee4c24"/><path d="M30 23l6 1-1 5-6-1z" fill="#7fc241"/><path d="M22 29h6l-1 6-6-1z" fill="#2aa9e8"/><path d="M29 29l6 1-1 5-6-1z" fill="#fcc419"/><path d="M24 41h10l2 3H22z" fill="#c3c7ca"/></svg></a>
        <span class="divider"></span>
        <a href="#" aria-label="文稿"><svg viewBox="0 0 44 44"><path d="M5 4h32v38H5z" fill="#fdfdfd"/><path d="m25 4 12 12V4z" fill="#f3b04a"/><path d="M25 4h8l4 4v3z" fill="#e2e2e2"/><path d="M12 20h16l3 13-1 4H11l-1-4z" fill="#7d878b"/><path d="M14 20h12v3H14z" fill="#22272a"/><path d="M11 33h19v3H11z" fill="#3c4346"/></svg></a>
        <a href="#" aria-label="废纸篓"><svg viewBox="0 0 44 44"><path d="M5 4h34l-5 36c-1 3-23 3-24 0z" fill="url(#gGlass)"/><ellipse cx="22" cy="4.500" rx="17" ry="3" fill="#d0d1d7" stroke="#f2f3f6" stroke-width="1.500"/></svg></a>
      </nav>
    </div>
  </body>
</html>
```
FILE: styles.css
```css
/* General */
* {
  box-sizing: border-box;
}

body {
  margin: 0;
  height: 100vh;
  min-height: 600px;
  display: flex;
  flex-direction: column;
  overflow: hidden;
  font-family: "Liberation Sans", "Noto Sans CJK SC", sans-serif;
  font-size: 11px;
  color: #1c1c1c;
  background: #1d1e28;
}

a {
  color: inherit;
  text-decoration: none;
}

button,
input,
select {
  font: inherit;
  color: inherit;
  margin: 0;
}

button {
  border: none;
  padding: 0;
  background: none;
}

svg {
  display: block;
  flex: none;
}

.defs {
  position: absolute;
  width: 0;
  height: 0;
}

/* Menu bar */
.menubar {
  height: 23px;
  display: flex;
  justify-content: space-between;
  align-items: center;
  padding: 0 23px 0 21px;
  border-bottom: 1px solid #5e3f48;
  background: linear-gradient(90deg, #fdebdf, #fde2e2 35%, #fcdbe1 65%, #eddaea);
  font-size: 14px;
  line-height: 22px;
  color: #3b2528;
}

.menus,
.extras {
  display: flex;
  align-items: center;
}

.menus {
  gap: 18px;
}

.menus .app {
  margin: 0 1px;
  font-weight: bold;
}

.menus .script {
  width: 16px;
  padding-left: 3px;
}

.extras {
  gap: 14px;
}

.extras .sogou {
  margin-left: 6px;
}

.extras .pct {
  font-size: 13px;
  margin-right: -8px;
}

.extras .time {
  margin-left: -6px;
  margin-right: 6px;
}

/* Window */
.window {
  flex: 1;
  min-height: 0;
  display: flex;
  flex-direction: column;
  background: #ececec;
  border-radius: 4px 4px 0 0;
  overflow: hidden;
}

.titlebar {
  height: 22px;
  display: grid;
  grid-template-columns: 1fr auto 1fr;
  align-items: center;
  background: linear-gradient(#ededed, #e3e3e3);
}

.lights {
  display: flex;
  gap: 8px;
  padding-left: 8px;
}

.light {
  width: 12px;
  height: 12px;
  border-radius: 50%;
}

.light.red {
  background: radial-gradient(circle, #6b0a12 2px, #fb3b47 3px);
}

.light.yellow {
  background: #fdb908;
}

.light.green {
  background: #0fcf3c;
}

.titlebar h1 {
  margin: 0;
  display: flex;
  align-items: center;
  gap: 5px;
  font-size: 13px;
  font-weight: normal;
  line-height: 20px;
  color: #444;
}

/* Standard toolbar */
.toolbar {
  height: 32px;
  display: flex;
  align-items: center;
  gap: 7px;
  padding: 0 6px 0 4px;
  border-bottom: 1px solid #a9a9a9;
  background: linear-gradient(#e3e3e3, #d1d1d1);
}

.tool {
  display: flex;
  align-items: center;
  color: #222;
}

.tool.split {
  width: 31px;
  gap: 3px;
}

.dim {
  opacity: 0.45;
}

.arr {
  color: #333;
}

.sep {
  width: 1px;
  height: 26px;
  margin: 0 -1px;
  border-left: 1px dotted #8a8a8a;
}

.zoom-pick {
  position: relative;
  width: 45px;
  height: 19px;
  margin-left: 2px;
}

.zoom-pick select {
  appearance: none;
  width: 45px;
  height: 19px;
  padding: 0 0 0 2px;
  border: 1px solid #8f8f8f;
  border-radius: 0;
  background: linear-gradient(90deg, #fff 29px, #b5b5b5 29px, #c9c9c9);
  color: #000;
}

.zoom-pick svg {
  position: absolute;
  right: 5px;
  top: 8px;
  color: #444;
  pointer-events: none;
}

.search {
  width: 264px;
  height: 21px;
  margin-left: auto;
  display: flex;
  border: 1px solid #777;
  border-radius: 11px;
  background: linear-gradient(#f6f6f6, #cfcfcf);
}

.search button {
  width: 32px;
  padding-left: 6px;
}

.search input {
  flex: 1;
  min-width: 0;
  padding: 0 7px;
  border: none;
  border-left: 1px solid #999;
  border-radius: 10px;
  background: #fff;
  font-size: 12px;
  outline: none;
}

.search input::placeholder {
  color: #b3b3b3;
}

/* Ribbon tabs */
.tabs {
  height: 20px;
  display: flex;
  background: linear-gradient(#cfd4e0, #abb2c8);
  border-bottom: 1px solid #8f96b4;
  font-weight: 500;
  line-height: 20px;
}

.tabs a {
  display: flex;
  align-items: center;
  padding: 0 15px;
  border-right: 1px solid #8b93ad;
}

.tabs a:first-child {
  gap: 6px;
  padding: 0 12px 0 21px;
}

.tabs a.latin {
  font-size: 12px;
  font-weight: bold;
}

.tabs a.active {
  height: 20px;
  padding-right: 11px;
  border-right: none;
  background: linear-gradient(#e9edf5, #d2d9e8);
}

.tabs a.context {
  position: relative;
  padding-left: 25px;
  background: linear-gradient(#d9b6e6, #c78cda);
}

.tabs a.context::before {
  content: "";
  position: absolute;
  left: 0;
  top: 0;
  width: 10px;
  height: 20px;
  background: #dde3ee;
  clip-path: polygon(0 0, 100% 50%, 0 100%);
}

.tab-tools {
  margin-left: auto;
  display: flex;
  gap: 12px;
  padding: 0 4px 0 8px;
  border-left: 1px solid #9097ab;
}

/* Ribbon */
.ribbon {
  height: 75px;
  padding: 2px;
  background: #cbd2e2;
  border-bottom: 1px solid #a9b3c6;
}

.panel {
  height: 71px;
  display: flex;
  border: 1px solid #b0b4bc;
  border-radius: 4px;
  background: linear-gradient(#ececec, #d9d9d9);
  padding-right: 25px;
}

.group {
  display: flex;
  flex-direction: column;
  border-right: 1px dotted #8a8a8a;
}

.group h2 {
  margin: 0;
  height: 15px;
  font-size: 9px;
  line-height: 15px;
  font-weight: 500;
  text-align: center;
  background: linear-gradient(#ebebeb, #dadada);
  border-bottom: 1px solid #e6e6e6;
}

.group-body {
  flex: 1;
  display: flex;
  min-height: 0;
}

.group.options {
  width: 217px;
}

.group.styles {
  flex: 1;
  min-width: 0;
}

.group.borders {
  width: 224px;
}

.big {
  width: 44px;
  display: flex;
  flex-direction: column;
  align-items: center;
  padding-top: 2px;
  font-size: 10px;
  line-height: 14px;
}

.big-icon {
  height: 35px;
  display: flex;
  align-items: center;
  gap: 3px;
}

.big .arr,
.shade .arr {
  color: #555;
}

.options .big {
  margin-left: 5px;
}

.borders .big {
  margin-left: 6px;
}

.checks {
  display: grid;
  grid-template-columns: 80px auto;
  grid-template-rows: repeat(3, 18px);
  margin: -1px 0 0 5px;
  font-size: 10px;
}

.checks label {
  display: flex;
  align-items: center;
  gap: 7px;
  white-space: nowrap;
}

.checks input {
  appearance: none;
  position: relative;
  width: 14px;
  height: 14px;
  border: 1px solid #9c9ca4;
  border-radius: 3px;
  background: linear-gradient(#fdfdfd, #dcdcdc);
}

.checks input:checked::after {
  content: "";
  position: absolute;
  left: 4px;
  top: -3px;
  width: 5px;
  height: 11px;
  border: solid #2c2c2c;
  border-width: 0 2px 2px 0;
  transform: rotate(38deg);
}

/* Table style gallery */
.gallery {
  flex: 1;
  min-width: 0;
  height: 54px;
  margin-left: 6px;
  padding: 0 5px 0 25px;
  display: flex;
  align-items: center;
  justify-content: space-between;
  border: 1px solid #a3a3a3;
  background: #f5f5f5;
}

.thumb {
  --line: #000;
  --fill: #bfbfbf;
  --dash: #000;
  width: 60px;
  height: 45px;
  background: #fff;
}

.thumb.selected {
  outline: 1px solid #69a5de;
  box-shadow: 0 0 2px #69a5de;
}

.thumb.blue { --line: #4a7ebb; --fill: #d0dff0; --dash: #2f5a92; }
.thumb.red { --line: #c9414b; --fill: #f3cccc; --dash: #94282f; }
.thumb.green { --line: #8cc152; --fill: #def0cd; --dash: #5f8f33; }
.thumb.purple { --line: #7a5c9e; --fill: #ddd3e6; --dash: #573b78; }
.thumb.teal { --line: #2f9fb2; --fill: #cdeaf1; --dash: #1f7f92; }
.thumb.orange { --line: #ef9445; --fill: #fde0ca; --dash: #cf6a1c; }
.thumb.head { --dash: #000; }

.th-line {
  fill: none;
  stroke: var(--line);
  shape-rendering: crispEdges;
}

.th-fill {
  fill: var(--fill);
}

.th-solid {
  fill: var(--line);
}

.th-dash {
  fill: none;
  stroke: var(--dash);
  stroke-dasharray: 6 4;
  shape-rendering: crispEdges;
}

.th-white {
  stroke: #fff;
}

.more {
  margin-left: 2px;
}

.shade {
  width: 87px;
  padding-left: 4px;
  display: grid;
  grid-template-rows: 26px 28px;
}

.shade button {
  display: grid;
  grid-template-columns: 40px 29px 6px;
  align-items: center;
  text-align: left;
}

.picks {
  width: 99px;
  margin-left: 8px;
  display: flex;
  flex-direction: column;
  gap: 4px;
  padding-top: 2px;
}

.pick {
  position: relative;
  height: 22px;
}

.pick select {
  appearance: none;
  width: 100%;
  height: 22px;
  padding: 0 4px;
  border: 1px solid #969696;
  border-radius: 4px;
  background: linear-gradient(#efefef, #cfcfcf);
}

.pick svg {
  position: absolute;
  right: 5px;
  top: 5px;
  pointer-events: none;
}

.pick.line::before {
  content: "";
  position: absolute;
  left: 11px;
  right: 23px;
  top: 10px;
  height: 1px;
  background: #000;
}

.draws {
  display: grid;
  grid-template-rows: 26px 28px;
  margin-left: 8px;
}

.draws button {
  display: flex;
  align-items: center;
  gap: 4px;
  font-size: 10px;
}

/* Document */
.main {
  flex: 1;
  min-height: 0;
  display: flex;
}

.doc {
  flex: 1;
  min-width: 0;
  display: flex;
  flex-direction: column;
}

.ruler-row {
  height: 24px;
  display: grid;
  grid-template-columns: 18px 1fr;
  background: #ececec;
}

.tabstop {
  width: 16px;
  height: 16px;
  margin: 4px 0 0 3px;
  padding-left: 2px;
  border-radius: 5px;
  background: #fff;
  box-shadow: 0 0 1px #aaa;
}

.hruler {
  margin: 0 auto;
}

.ticks {
  fill: none;
  stroke: #8d979e;
  shape-rendering: crispEdges;
}

.ticks.dark {
  stroke: #555;
}

.nums text,
.vnums text {
  font-size: 10px;
  fill: #333;
}

.nums text {
  text-anchor: end;
}

.vnums text {
  text-anchor: middle;
}

.cols path {
  stroke: #1765c4;
  shape-rendering: crispEdges;
}

.work {
  flex: 1;
  min-height: 0;
  display: flex;
  overflow: hidden;
}

.canvas {
  flex: 1;
  min-width: 0;
  padding-top: 12px;
  display: flex;
  justify-content: center;
  border-left: 1px solid #8791a0;
  border-right: 1px solid #7e8998;
  background: linear-gradient(#bfc4d1, #b0b6c4 33%, #a1a9b8 55%, #999fb0 72%, #98a2ae 78%, #99a4ae);
  box-shadow: inset 0 1px 2px #8791a0, inset 3px 0 2px -1px #929cab;
}

.page {
  position: relative;
  width: 596px;
  height: 842px;
  flex: none;
  padding: 73px 72px 0 84px;
  background: #fff;
  box-shadow: 0 0 0 1px #8d95a3, 0 0 3px 1px #8d95a3;
}

.corner {
  position: absolute;
  top: 55px;
  width: 18px;
  height: 18px;
  border-bottom: 1px solid #c0c0c0;
}

.corner.left {
  left: 72px;
  border-right: 1px solid #c0c0c0;
}

.corner.right {
  right: 73px;
  border-left: 1px solid #c0c0c0;
}

.sheet {
  position: relative;
}

.sheet svg {
  width: 8px;
  height: 8px;
}

.sheet .move {
  position: absolute;
  left: -13px;
  top: -14px;
}

.sheet .move svg {
  width: 13px;
  height: 13px;
}

.sheet table {
  width: 440px;
  height: 152px;
  table-layout: fixed;
  border-collapse: collapse;
}

.sheet td {
  width: 71px;
  padding: 0 0 0 6px;
  border: 1px solid #000;
}

.sheet td.end {
  width: 13px;
  padding-left: 2px;
  border: none;
}

.sheet td.merged {
  position: relative;
  padding-top: 6px;
  vertical-align: top;
}

/* Text cursor */
.sheet td.merged::before {
  content: "";
  position: absolute;
  left: 4px;
  top: 3px;
  width: 1px;
  height: 15px;
  background: #000;
}

.sheet .resize {
  position: absolute;
  left: 427px;
  top: 153px;
  width: 7px;
  height: 7px;
  border: 1px solid #8aa0cf;
}

.sheet p {
  margin: 7px 0 0 7px;
}

/* Vertical scroll bar */
.vscroll {
  width: 16px;
  display: flex;
  flex-direction: column;
  padding-left: 1px;
  background: #fafafa;
}

.splitter {
  height: 12px;
  border: 1px solid #2f62a8;
  background: linear-gradient(#a8ccf4 4px, #2f62a8 4px, #2f62a8 5px, #8ebcf0 5px);
}

.track {
  flex: 1;
  padding: 2px 4px;
}

.thumb-bar {
  width: 8px;
  height: 70%;
  border-radius: 4px;
  background: #c1c1c1;
}

.nav {
  height: 15px;
  padding-left: 3px;
  border: 1px solid #a5a5a5;
  border-radius: 3px;
  background: linear-gradient(#fff, #d5d5d5);
}

/* Footer */
.footer {
  height: 33px;
  display: flex;
  color: #000;
}

.views {
  width: 178px;
  padding: 5px 4px 4px 3px;
  display: flex;
  background: #e3e3e3;
}

.views button {
  flex: 1;
  display: flex;
  justify-content: center;
  align-items: center;
  border: 1px solid #555;
  border-left-width: 0;
  background: linear-gradient(#fbfbfb, #d3d3d3);
}

.views button:first-child {
  border-left-width: 1px;
  border-radius: 3px 0 0 3px;
}

.views button:last-child {
  border-radius: 0 3px 3px 0;
}

.views button.on {
  background: linear-gradient(#3d434a, #686e76);
}

.info {
  flex: 1;
  display: flex;
  flex-direction: column;
}

.hscroll {
  height: 15px;
  background: #f6f6f6;
}

.status {
  height: 18px;
  display: flex;
  align-items: stretch;
  border-top: 1px solid #8e8e8e;
  background: linear-gradient(#f2f2f2, #d5d5d5 60%, #dedede);
  line-height: 16px;
}

.cell {
  display: flex;
  justify-content: space-between;
  padding: 0 5px;
  border-right: 1px solid #8e8e8e;
}

.view-name {
  width: 79px;
  font-size: 10px;
  color: #333;
}

.section {
  width: 38px;
  justify-content: flex-end;
  padding: 0 4px;
}

.pages {
  width: 94px;
  padding-right: 26px;
}

.place {
  width: 150px;
  padding-right: 4px;
}

.words {
  width: 108px;
  padding-right: 33px;
}

.spell {
  width: 38px;
  align-items: center;
  padding-left: 9px;
}

.status .zoom {
  margin-left: auto;
  font-size: 12px;
  line-height: 18px;
}

.status input {
  appearance: none;
  width: 100px;
  height: 16px;
  margin: 0 17px 0 12px;
  background: none;
}

.status input::-webkit-slider-runnable-track {
  height: 5px;
  border: 1px solid #888;
  border-radius: 3px;
  background: #b0b0b0;
}

.status input::-webkit-slider-thumb {
  appearance: none;
  width: 11px;
  height: 11px;
  margin-top: -4px;
  border: 2px solid #8a8a8a;
  border-radius: 50%;
  background: radial-gradient(circle, #555 1px, #eee 2px);
}

.status .grip {
  align-self: flex-end;
}

/* Dock */
.desktop {
  height: 65px;
  padding: 0 43px;
  background:
    radial-gradient(ellipse 30px 9px at 10px 42px, #77706c, transparent),
    radial-gradient(ellipse 24px 12px at 24px 12px, #4f4a4b, transparent),
    radial-gradient(ellipse 22px 10px at 30px 60px, #454145, transparent),
    radial-gradient(ellipse 16px 10px at calc(100% - 18px) 12px, #454654, transparent),
    radial-gradient(ellipse 20px 8px at calc(100% - 8px) 44px, #33364a, transparent),
    linear-gradient(90deg, #242225, #14151e);
}

.dock {
  height: 65px;
  padding: 0 4px;
  display: flex;
  align-items: center;
  border-radius: 4px 4px 0 0;
  background: radial-gradient(ellipse at 78% 100%, rgba(146, 154, 196, 0.9), rgba(146, 154, 196, 0) 22%), linear-gradient(90deg, #68666e, #7e7c88 20%, #716f80 38%, #7c7b92 55%, #7c7c96 80%, #696a80);
}

.dock a {
  position: relative;
  flex: 1;
  display: flex;
  justify-content: center;
  padding-bottom: 4px;
}

.dock svg {
  width: 44px;
  height: 44px;
  overflow: visible;
}

.dock .logo text {
  font-family: Roboto, "Liberation Sans", sans-serif;
  font-size: 48px;
  text-anchor: middle;
  stroke-width: 6;
  stroke-linejoin: round;
}

.petals {
  mix-blend-mode: multiply;
}

.dock .running::after {
  content: "";
  position: absolute;
  bottom: -8px;
  left: 50%;
  width: 4px;
  height: 4px;
  margin-left: -2px;
  border-radius: 50%;
  background: #0a0a12;
}

.divider {
  width: 24px;
  height: 46px;
  background: linear-gradient(#3f4052, #3f4052) center / 1px 100% no-repeat;
}
```
